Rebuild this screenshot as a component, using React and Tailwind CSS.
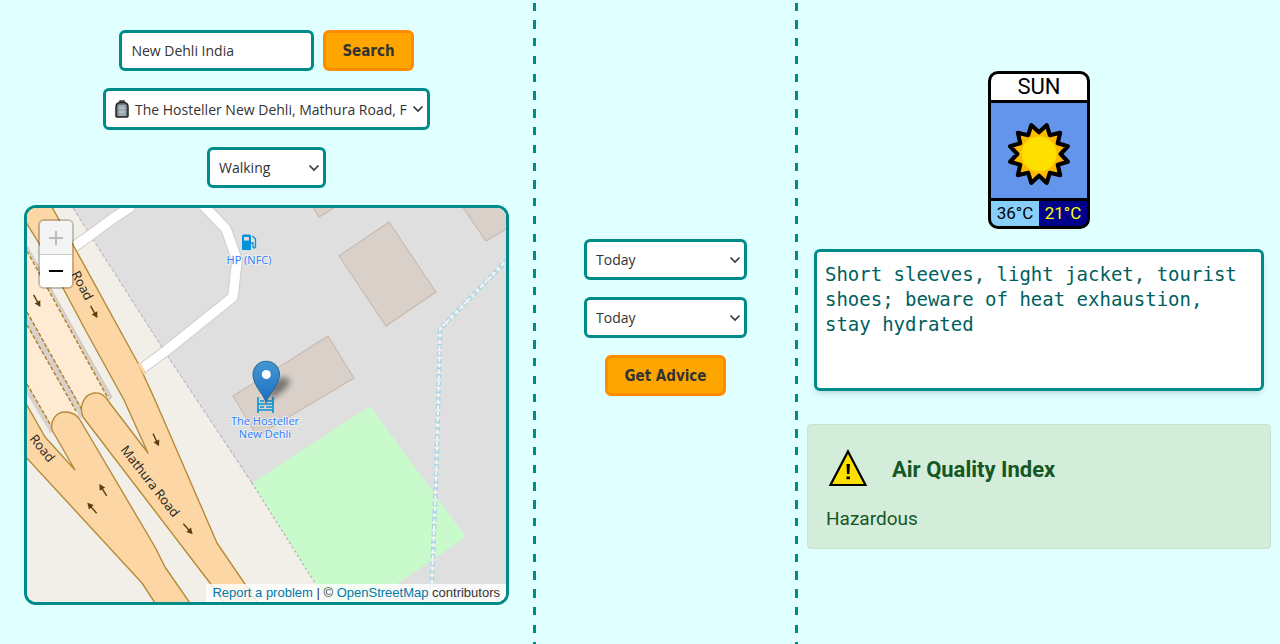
import { useState } from 'react';

const field = "rounded-md border-3 border-[#008b8b] bg-white font-['Open_Sans',sans-serif] text-sm text-[#333] outline-none";
const action = "h-[41px] rounded-md border-3 border-[#ff8c00] bg-[#ffa500] px-4 pt-0.5 font-['DejaVu_Sans_Condensed','DejaVu_Sans',sans-serif] text-[15px] font-bold text-[#333] cursor-pointer";

const Divider = () => (
    <div className="bg-[repeating-linear-gradient(to_bottom,transparent_0_0.4%,#008b8b_0.4%_1.7%,transparent_1.7%_2.76%)]"></div>
);

const Select = ({ label, options, className, icon }) => (
    <div className={`relative max-w-full ${className}`}>
        {icon && <span className="pointer-events-none absolute inset-y-0 left-[10px] flex items-center">{icon}</span>}
        <select
            aria-label={label}
            className={`${field} h-full w-full appearance-none overflow-hidden pr-4 pt-px ${icon ? "pl-[29px]" : "pl-[9px]"}`}
        >
            {options.map((option) => <option key={option}>{option}</option>)}
        </select>
        <svg className="pointer-events-none absolute inset-y-0 right-[6px] my-auto" width="12" height="12" viewBox="0 0 12 12" fill="none" stroke="#3a3a3a" strokeWidth="1.7">
            <path d="M1.5 3.5 6 8l4.5-4.5" />
        </svg>
    </div>
);

const Luggage = () => (
    <svg width="18" height="20" viewBox="0 0 18 20">
        <path d="M7 4V2h4v2" fill="none" stroke="#333" strokeWidth="1.5" />
        <path d="M3 8Q3 4.500 6.500 3.600h5Q15 4.500 15 8v9q0 1-1 1H4q-1 0-1-1z" fill="#6f7d86" stroke="#222" strokeWidth="1.5" />
        <path d="M5.500 6h7v11h-7z" fill="#9baab3" />
        <path d="M5.5 9h7M5.5 13h7" stroke="#c5d0d6" />
    </svg>
);

const arrows = [
    [37, 301, 61], [94, 312, 61], [156, 440, 65], [188, 529, 48], [103, 490, 238], [92, 508, 228],
];

const MapDrawing = () => (
    <svg
        className="absolute inset-0 h-full w-full font-['Open_Sans',sans-serif]"
        viewBox="27 208 479 394"
        preserveAspectRatio="xMidYMid slice"
    >
        <defs>
            <linearGradient id="pin" x1="0" y1="0" x2="0" y2="1">
                <stop offset="0" stopColor="#4596d1" />
                <stop offset="1" stopColor="#1a6fc4" />
            </linearGradient>
            <filter id="soft" x="-50%" y="-50%" width="200%" height="200%">
                <feGaussianBlur stdDeviation="3" />
            </filter>
        </defs>
        <path d="M27 208H506V602H27z" fill="#f2efe9" />
        <path d="M73 208 165 352 252 483 327 602H506V208z" fill="#dfdfdf" />
        <path d="M252 483 370 406 466 537 370 602H327z" fill="#c8facc" />

        {/* buildings */}
        <g fill="#d9d0c9" stroke="#c7b7ab">
            <path d="M389 222 436 292 386 326 339 256z" />
            <path d="M328 336 354 378 257 436 233 396z" />
            <path d="M312 206 319 217 337 206z" />
            <path d="M462 206 486 241 508 228V206z" />
        </g>
        <path d="M73 208 165 352 252 483" fill="none" stroke="#bfaec2" strokeDasharray="4 2" />
        <path d="M252 483 327 602" fill="none" stroke="#b4b4ac" strokeWidth="1.5" strokeDasharray="2 3" />

        {/* service road */}
        <g fill="none" strokeLinejoin="bevel">
            <path d="M72 248 92 234 112 219 132 206M203 205 226 229 237 260 233 297 167 350 140 370" stroke="#cfcdca" strokeWidth="11.5" />
            <path d="M72 248 92 234 112 219 132 206M203 205 226 229 237 260 233 297 167 350 140 370" stroke="#fff" strokeWidth="9.5" />
        </g>

        {/* footpath */}
        <g fill="none">
            <path d="M508 259 440 329 438 410 436 480 431 602" stroke="#f0f4f3" strokeWidth="4" opacity=".6" />
            <path d="M508 259 440 329 438 410 436 480 431 602" stroke="#a9d5e4" strokeWidth="4.5" strokeDasharray="5 2.5" />
            <path d="M508 259 440 329 438 410 436 480 431 602" stroke="#f6f4ef" strokeWidth="2" strokeDasharray="4 2" />
        </g>

        {/* flyover */}
        <path d="M27 246 112 397 107 402 27 257z" fill="#d9d0c9" stroke="#c7b7ab" strokeWidth=".7" />
        <path d="M27 250 108 398 82 412 27 312z" fill="#ffebd4" />
        <path d="M27 312 84 412 80 419 27 325z" fill="#d9d0c9" />
        <path d="M27 325 78 414 54 432 27 384z" fill="#ffebd4" />
        <path d="M27 384 54 430 51 434 27 394z" fill="#d9d0c9" />
        <path d="M27 251 108 398M27 312 82 410M27 325 76 411M27 384 54 431" fill="none" stroke="#b08430" strokeWidth="1.5" strokeDasharray="4 2" />

        {/* trunk roads */}
        <g fill="#fcd6a4" stroke="#b48b38" strokeWidth="1.4" strokeLinejoin="round">
            <path d="M24 200 48 200 77 252 139 365 155 400 217 543 260 606H226L210 583 83 417C79 407 83 395 94 393 101 392 106 397 109 402L148 453 124 400 87 333 40 245 24 219z" />
            <path d="M24 400 45 437 75 470 52 430C50 421 56 412 65 412 72 412 77 415 80 420L155 547 165 567 192 606H157L142 583 24 455z" />
        </g>
        <path d="M139 363 145 374" stroke="#fcd6a4" strokeWidth="3" />

        {arrows.map(([x, y, turn]) => (
            <g key={`${x}-${y}`} transform={`translate(${x} ${y}) rotate(${turn})`}>
                <path d="M-7 0H3" stroke="#5e3d0c" strokeWidth="1.4" />
                <path d="M1-3.2 7 0 1 3.2z" fill="#5e3d0c" />
            </g>
        ))}

        <g fill="#222" fontSize="13">
            <text transform="translate(71 274) rotate(62)">Road</text>
            <text transform="translate(29 439) rotate(51)">Road</text>
            <text transform="translate(120 450) rotate(52)">Mathura Road</text>
        </g>

        <g fill="#0092da">
            <path d="M242 236q0-1.500 1.500-1.500h6q1.500 0 1.500 1.500v14h-9z" />
            <path d="M244 237h5v3.500h-5z" fill="#dfdfdf" />
            <path d="M251 243h2v4q1.500 2 2.500 0v-8l-3-3" fill="none" stroke="#0092da" strokeWidth="1.300" />
        </g>
        <path d="M258 397v16M273 397v16M258 404h15M258 410h15M260 401h4M266 401h6M260 407h4M266 407h6" fill="none" stroke="#0092da" strokeWidth="1.600" />
        <g fill="#2f7bff" fontSize="11" textAnchor="middle" stroke="#f5f5f5" strokeWidth="2" strokeOpacity=".7" paintOrder="stroke">
            <text x="249" y="264">HP (NFC)</text>
            <text x="265" y="425">The Hosteller</text>
            <text x="265" y="438">New Dehli</text>
        </g>

        <path d="M267 401 272 384Q284 372 290 381 287 391 267 401z" fill="#000" opacity=".45" filter="url(#soft)" />
        <path d="M266 403C264 393 253 387 253 374.500A13.200 13.200 0 0 1 279.500 374.500C279.500 387 268 393 266 403z" fill="url(#pin)" stroke="#2e6c97" />
        <circle cx="266.300" cy="374.500" r="4.500" fill="#fff" />
    </svg>
);

const MapPanel = () => (
    <div className="relative h-[400px] w-[91%] overflow-hidden rounded-xl border-3 border-[#008b8b]">
        <MapDrawing />
        <div className="absolute left-[11px] top-[11px] flex flex-col rounded-md border-2 border-black/20 bg-clip-padding">
            <button aria-label="Zoom in" disabled className="flex h-[34px] w-8 items-center justify-center rounded-t-sm border-b border-[#ccc] bg-[#f4f4f4]">
                <svg width="14" height="14" stroke="#bbb" strokeWidth="2"><path d="M0 7H14M7 0V14" /></svg>
            </button>
            <button aria-label="Zoom out" className="flex h-8 w-8 items-center justify-center rounded-b-sm bg-white">
                <svg width="14" height="14" stroke="#000" strokeWidth="2"><path d="M0 7H14" /></svg>
            </button>
        </div>
        <div className="absolute bottom-0 right-0 bg-white/80 px-[6px] font-['Liberation_Sans',sans-serif] text-[13px] leading-[18px] text-[#333]">
            <a href="#report" className="text-[#0078a8]">Report a problem</a> | © <a href="#osm" className="text-[#0078a8]">OpenStreetMap</a> contributors
        </div>
    </div>
);

// twelve spikes, none of them pointing straight up
const spikes = Array.from({ length: 24 }, (_, i) => {
    const angle = ((i * 15 + 15) * Math.PI) / 180;
    const radius = i % 2 === 0 ? 29 : 21;
    return `${32 + radius * Math.sin(angle)},${32 - radius * Math.cos(angle)}`;
}).join(' ');

const WeatherCard = () => (
    <div className="w-[102px] overflow-hidden rounded-[10px] border-3 border-black bg-black text-center">
        <div className="bg-white text-[22px] leading-[26px] text-black">SUN</div>
        <div className="my-[3px] flex h-[95px] items-center justify-center bg-[#6495ed] pt-[6px]">
            <svg width="66" height="66" viewBox="0 0 64 64">
                <polygon points={spikes} fill="#fcb900" stroke="#000" strokeWidth="4" strokeLinejoin="round" />
                <circle cx="32" cy="32" r="17" fill="#fde000" />
            </svg>
        </div>
        <div className="grid grid-cols-2 text-[17px] leading-[25px]">
            <span className="bg-[#87cefa] text-black">36°C</span>
            <span className="bg-[#00008b] text-[#ffff00]">21°C</span>
        </div>
    </div>
);

const App = () => {
    const [place, setPlace] = useState("New Dehli India");
    const [advice, setAdvice] = useState("Short sleeves, light jacket, tourist shoes; beware of heat exhaustion, stay hydrated");

    return (
        <main className="grid min-h-screen grid-cols-[533fr_3px_259fr_3px_482fr] bg-[#e0ffff]">
            <section className="flex min-w-0 flex-col items-center gap-[17px] pt-[30px]">
                <form className="flex gap-[9px]" onSubmit={(e) => e.preventDefault()}>
                    <input
                        aria-label="Place"
                        value={place}
                        onChange={(e) => setPlace(e.target.value)}
                        className={`${field} h-[41px] w-[195px] px-[9px]`}
                    />
                    <button className={action}>Search</button>
                </form>
                <Select label="Lodging" className="h-[42px] w-[327px]" icon={<Luggage />} options={["The Hosteller New Dehli, Mathura Road, F"]} />
                <Select label="Travel mode" className="h-[41px] w-[119px]" options={["Walking", "Driving", "Cycling"]} />
                <MapPanel />
            </section>
            <Divider />
            <section className="flex min-w-0 flex-col items-center justify-center gap-[17px] pb-[9px]">
                <Select label="From" className="h-[41px] w-[163px]" options={["Today", "Tomorrow"]} />
                <Select label="To" className="h-[41px] w-[163px]" options={["Today", "Tomorrow"]} />
                <button className={action}>Get Advice</button>
            </section>
            <Divider />
            <section className="flex min-w-0 flex-col items-center justify-center px-[9px] pb-6 font-[Roboto,sans-serif]">
                <WeatherCard />
                <textarea
                    aria-label="Advice"
                    value={advice}
                    onChange={(e) => setAdvice(e.target.value)}
                    className="mt-5 h-[142px] w-[97%] resize-none rounded-md border-3 border-[#008b8b] bg-white px-2 py-[10px] font-['DejaVu_Sans_Mono',monospace] text-[19px] leading-[25px] text-[#005f5f] shadow-md outline-none"
                />
                <div className="mt-[33px] w-full rounded border border-[#c3e6cb] bg-[#d4edda] px-[18px] pb-[15px] pt-6 text-[#155724]">
                    <div className="flex items-center gap-6">
                        <svg width="42" height="40" viewBox="0 0 42 40">
                            <path d="M22 2.500 39.500 36H4.500z" fill="#fde000" stroke="#000" strokeWidth="2.200" />
                            <path d="M20.500 15h3.400l-.5 10h-2.400zM20.500 27.500h3.400v2.800h-3.400z" fill="#000" />
                        </svg>
                        <h2 className="text-[22px] font-bold">Air Quality Index</h2>
                    </div>
                    <p className="mt-4 text-[19px] leading-7">Hazardous</p>
                </div>
            </section>
        </main>
    );
};

export default App;
